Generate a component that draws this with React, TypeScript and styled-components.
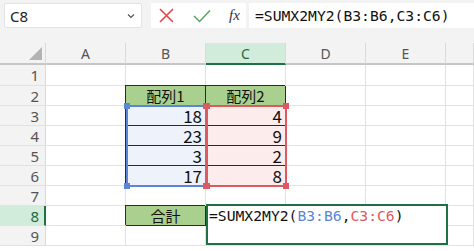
import styled, { createGlobalStyle } from 'styled-components'

const GlobalStyle = createGlobalStyle`
  body {
    margin: 0;
    background: #f3f3f3;
    font-family: "Noto Sans", "Noto Sans CJK JP", sans-serif;
    overflow: hidden;
  }
`

const Window = styled.div`
  width: 474px;
  height: 251px;
  overflow: hidden;
  background: #f3f3f3;
  display: flex;
  flex-direction: column;
`

const Toolbar = styled.div`
  height: 43px;
  flex: none;
  box-sizing: border-box;
  padding: 3px 0 0 4px;
  display: flex;
  align-items: flex-start;
`

const NameBox = styled.div`
  width: 138px;
  height: 25px;
  box-sizing: border-box;
  background: #fff;
  border: 1px solid #e3e3e3;
  border-radius: 2px;
  display: flex;
  align-items: center;
  justify-content: space-between;
  padding: 0 6px 0 5px;
  font-size: 15px;
  color: #222;
`

const ActionPanel = styled.div`
  margin-left: 9px;
  width: 95px;
  height: 25px;
  background: #fff;
  display: flex;
  align-items: center;
  padding-left: 8px;
  box-sizing: border-box;
`

const ActionIcon = styled.span<{ $w: number }>`
  width: ${p => p.$w}px;
  display: flex;
  align-items: center;
`

const Fx = styled.span`
  font-family: "Liberation Serif", serif;
  font-style: italic;
  font-size: 15px;
  color: #333;
  margin-left: 2px;
`

const FormulaInput = styled.div`
  margin-left: 3px;
  flex: 1;
  height: 25px;
  background: #fff;
  display: flex;
  align-items: center;
  padding-left: 6px;
  font-family: "DejaVu Sans Mono", monospace;
  font-size: 14.7px;
  color: #111;
  white-space: nowrap;
`

const Sheet = styled.div`
  position: relative;
  flex: 1;
  display: grid;
  grid-template-columns: 46px repeat(5, 80px) 1fr;
  grid-template-rows: 22px 21px repeat(8, 20px) 1fr;
  background: #fff;
`

const Corner = styled.div`
  background: #f3f3f3;
  border-bottom: 2px solid #c6c6c6;
  border-right: 1px solid #dadada;
  box-sizing: border-box;
  display: flex;
  align-items: flex-end;
  justify-content: flex-end;
  padding: 0 3px 3px 0;
`

const ColHead = styled.div<{ $active?: boolean }>`
  box-sizing: border-box;
  background: ${p => (p.$active ? '#d2ecdc' : '#f3f3f3')};
  border-bottom: 2px solid ${p => (p.$active ? '#1e7145' : '#c6c6c6')};
  border-right: 1px solid #dadada;
  display: flex;
  align-items: center;
  justify-content: center;
  font-size: 14px;
  color: ${p => (p.$active ? '#1e6a40' : '#555')};
`

const RowHead = styled.div<{ $active?: boolean }>`
  box-sizing: border-box;
  background: ${p => (p.$active ? '#d2ecdc' : '#f3f3f3')};
  border-right: ${p => (p.$active ? '2px solid #1e7145' : '1px solid #dadada')};
  border-bottom: 1px solid #e2e2e2;
  display: flex;
  align-items: center;
  justify-content: flex-end;
  padding-right: ${p => (p.$active ? '5px' : '6px')};
  font-size: 15px;
  color: ${p => (p.$active ? '#1e6a40' : '#555')};
`

type Tone = 'title' | 'blue' | 'red'

const toneBg: Record<Tone, string> = {
  title: '#a9d08e',
  blue: '#edf2fb',
  red: '#fdecec',
}

const Cell = styled.div<{ $tone?: Tone; $align?: 'left' | 'center' | 'right' }>`
  box-sizing: border-box;
  background: ${p => (p.$tone ? toneBg[p.$tone] : '#fff')};
  border-right: 1px solid ${p => (p.$tone ? '#2b2b2b' : '#e2e2e2')};
  border-bottom: 1px solid ${p => (p.$tone ? '#2b2b2b' : '#e2e2e2')};
  box-shadow: ${p => (p.$tone ? '-1px -1px 0 0 #2b2b2b' : 'none')};
  display: flex;
  align-items: center;
  justify-content: ${p =>
    p.$align === 'right' ? 'flex-end' : p.$align === 'center' ? 'center' : 'flex-start'};
  padding: 0 3px;
  font-family: "Noto Sans CJK JP", "Noto Sans", sans-serif;
  font-size: ${p => (p.$tone === 'title' ? '15px' : '17px')};
  color: #111;
  line-height: 1;
`

const Filler = styled.div`
  grid-column: 1 / -1;
  background: #fff;
`

const Range = styled.div<{ $color: string }>`
  position: absolute;
  box-sizing: border-box;
  border: 2px solid ${p => p.$color};
  pointer-events: none;
`

const Handle = styled.span<{ $color: string; $x: 'l' | 'r'; $y: 't' | 'b' }>`
  position: absolute;
  width: 6px;
  height: 6px;
  background: ${p => p.$color};
  ${p => (p.$x === 'l' ? 'left: -4px;' : 'right: -4px;')}
  ${p => (p.$y === 't' ? 'top: -4px;' : 'bottom: -4px;')}
`

const Editor = styled.div`
  position: absolute;
  left: 206px;
  top: 161px;
  width: 242px;
  height: 41px;
  box-sizing: border-box;
  border: 2px solid #1e7145;
  background: #fff;
  padding: 1px 0 0 1px;
  font-family: "DejaVu Sans Mono", monospace;
  font-size: 14.7px;
  line-height: 18px;
  color: #111;
  white-space: nowrap;
`

const Ref = styled.span<{ $color: string }>`
  color: ${p => p.$color};
`

const BLUE = '#5b86d8'
const RED = '#dd5a60'

const cols = ['A', 'B', 'C', 'D', 'E', '']

type CellData = { text?: string; tone?: Tone; align?: 'left' | 'center' | 'right' }

const rows: Record<number, Record<string, CellData>> = {
  2: { B: { text: '配列1', tone: 'title', align: 'center' }, C: { text: '配列2', tone: 'title', align: 'center' } },
  3: { B: { text: '18', tone: 'blue', align: 'right' }, C: { text: '4', tone: 'red', align: 'right' } },
  4: { B: { text: '23', tone: 'blue', align: 'right' }, C: { text: '9', tone: 'red', align: 'right' } },
  5: { B: { text: '3', tone: 'blue', align: 'right' }, C: { text: '2', tone: 'red', align: 'right' } },
  6: { B: { text: '17', tone: 'blue', align: 'right' }, C: { text: '8', tone: 'red', align: 'right' } },
  8: { B: { text: '合計', tone: 'title', align: 'center' } },
}

const Handles = ({ color }: { color: string }) => (
  <>
    <Handle $color={color} $x="l" $y="t" />
    <Handle $color={color} $x="r" $y="t" />
    <Handle $color={color} $x="l" $y="b" />
    <Handle $color={color} $x="r" $y="b" />
  </>
)

const RowRender = ({ r }: { r: number }) => (
  <>
    <RowHead $active={r === 8}>{r}</RowHead>
    {cols.map((c, i) => {
      const d = rows[r]?.[c]
      return (
        <Cell key={i} $tone={d?.tone} $align={d?.align}>
          {d?.text}
        </Cell>
      )
    })}
  </>
)

export default function App() {
  return (
    <Window>
      <GlobalStyle />
      <Toolbar>
        <NameBox>
          <span>C8</span>
          <svg width="8" height="6" viewBox="0 0 8 6">
            <path d="M1 1.5 L4 4.5 L7 1.5" fill="none" stroke="#555" strokeWidth="1.2" />
          </svg>
        </NameBox>
        <ActionPanel>
          <ActionIcon $w={34}>
            <svg width="15" height="15" viewBox="0 0 15 15">
              <path d="M1 1 L14 14 M14 1 L1 14" stroke="#e0474c" strokeWidth="1.6" fill="none" />
            </svg>
          </ActionIcon>
          <ActionIcon $w={34}>
            <svg width="18" height="14" viewBox="0 0 18 14">
              <path d="M1 7 L6.5 12.5 L17 1.5" stroke="#5aa55f" strokeWidth="1.5" fill="none" />
            </svg>
          </ActionIcon>
          <Fx>fx</Fx>
        </ActionPanel>
        <FormulaInput>=SUMX2MY2(B3:B6,C3:C6)</FormulaInput>
      </Toolbar>
      <Sheet>
        <Corner>
          <svg width="13" height="13" viewBox="0 0 13 13">
            <path d="M13 0 L13 13 L0 13 Z" fill="#b3b3b3" />
          </svg>
        </Corner>
        {cols.map((c, i) => (
          <ColHead key={i} $active={c === 'C'}>
            {c}
          </ColHead>
        ))}
        {Array.from({ length: 9 }, (_, r) => r + 1).map(r => (
          <RowRender key={r} r={r} />
        ))}
        <Filler />
        <Range $color={BLUE} style={{ left: 126, top: 62, width: 81, height: 82 }}>
          <Handles color={BLUE} />
        </Range>
        <Range $color={RED} style={{ left: 206, top: 62, width: 81, height: 82 }}>
          <Handles color={RED} />
        </Range>
        <Editor>
          =SUMX2MY2(<Ref $color={BLUE}>B3:B6</Ref>,<Ref $color={RED}>C3:C6</Ref>)
        </Editor>
      </Sheet>
    </Window>
  )
}
